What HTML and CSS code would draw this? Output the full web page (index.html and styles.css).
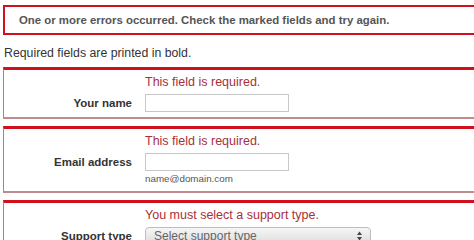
FILE: index.html
```html
<!DOCTYPE html>
<html>
<head>
<meta charset="utf-8">
<link rel="stylesheet" href="styles.css">
</head>
<body>
<div class="page">
  <div class="alert">One or more errors occurred. Check the marked fields and try again.</div>
  <p class="note">Required fields are printed in bold.</p>
  <div class="group">
    <div class="row">
      <div class="label"></div>
      <div class="error">This field is required.</div>
    </div>
    <div class="row">
      <div class="label">Your name</div>
      <div class="input"></div>
    </div>
  </div>
  <div class="group">
    <div class="row">
      <div class="label"></div>
      <div class="error">This field is required.</div>
    </div>
    <div class="row">
      <div class="label">Email address</div>
      <div class="input"></div>
    </div>
    <div class="row">
      <div class="label"></div>
      <div class="hint">name@domain.com</div>
    </div>
  </div>
  <div class="group">
    <div class="row">
      <div class="label"></div>
      <div class="error">You must select a support type.</div>
    </div>
    <div class="row">
      <div class="label">Support type</div>
      <div class="select">
        <span>Select support type</span>
        <svg class="arrows" width="7" height="10" viewBox="0 0 7 10"><path d="M3.5 0.5 L6 4 H1 Z M3.5 9.5 L6 6 H1 Z" fill="#444"/></svg>
      </div>
    </div>
  </div>
</div>
</body>
</html>
```

FILE: styles.css
```css
html, body {
  margin: 0;
  padding: 0;
  background: #fff;
  overflow: hidden;
}
.page {
  width: 520px;
  padding: 5px 0 0 3px;
  font-family: "Liberation Sans", Arial, sans-serif;
  color: #333;
}
.alert {
  box-sizing: border-box;
  height: 30px;
  border: 2px solid #d0101c;
  padding: 0 0 0 14px;
  display: flex;
  align-items: center;
  font-size: 11.4px;
  font-weight: bold;
  color: #555;
}
.note {
  margin: 11px 0 0 1px;
  font-size: 12.3px;
  line-height: 14px;
  color: #333;
}
.group {
  margin-top: 7px;
  border-top: 3px solid #d0101c;
  border-left: 1px solid #d07078;
  border-bottom: 2px solid #c08a8e;
  padding: 4px 0 5px;
}
.group + .group {
  margin-top: 7px;
}
.row {
  display: grid;
  grid-template-columns: 128px 1fr;
  column-gap: 13px;
  align-items: center;
}
.label {
  text-align: right;
  font-size: 11.5px;
  font-weight: bold;
  color: #333;
}
.error {
  font-size: 12.5px;
  line-height: 17px;
  color: #a83038;
  margin-bottom: 3px;
}
.input {
  width: 142px;
  height: 16px;
  border: 1px solid #c8c8c8;
  background: #fff;
}
.hint {
  font-size: 9.8px;
  line-height: 14px;
  color: #555;
  margin-top: 1px;
}
.select {
  box-sizing: border-box;
  width: 226px;
  height: 18px;
  border: 1px solid #bdbdbd;
  border-radius: 4px;
  background: linear-gradient(#f6f6f6, #dcdcdc);
  display: flex;
  align-items: center;
  justify-content: space-between;
  padding: 0 7px 0 8px;
  font-size: 12px;
  color: #666;
}
.arrows {
  display: block;
}
```
